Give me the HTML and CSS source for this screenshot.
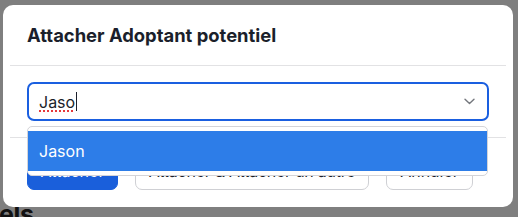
FILE: index.html
```html
<!DOCTYPE html>
<html lang="fr">
<head>
<meta charset="utf-8">
<title>Attacher Adoptant potentiel</title>
<link rel="stylesheet" href="styles.css">
</head>
<body>
<div class="page">
  <h2 class="page-title">els</h2>
</div>
<div class="overlay">
  <div class="modal">
    <div class="modal-header">
      <h1 class="modal-title">Attacher Adoptant potentiel</h1>
    </div>
    <div class="modal-body">
      <div class="select">
        <div class="select-input">
          <span class="typed">Jaso</span><span class="caret"></span>
          <svg class="chevron" width="11" height="7" viewBox="0 0 11 7"><path d="M1 1.2 L5.5 5.6 L10 1.2" fill="none" stroke="#74777d" stroke-width="1.4" stroke-linecap="round" stroke-linejoin="round"/></svg>
        </div>
        <ul class="select-menu">
          <li class="option active">Jason</li>
        </ul>
      </div>
    </div>
    <div class="modal-footer">
      <button class="btn btn-primary btn-attach">Attacher</button>
      <button class="btn btn-outline btn-attach-more">Attacher &amp; Attacher un autre</button>
      <button class="btn btn-outline btn-cancel">Annuler</button>
    </div>
  </div>
</div>
</body>
</html>
```
FILE: styles.css
```css
html, body {
  margin: 0;
  padding: 0;
}
body {
  width: 518px;
  height: 217px;
  overflow: hidden;
  position: relative;
  background: #ffffff;
  font-family: Inter, "Noto Sans", "Liberation Sans", sans-serif;
}
.page {
  height: 217px;
  overflow: hidden;
  display: flex;
  flex-direction: column;
  justify-content: flex-end;
}
.page-title {
  margin: 0 0 -12px -1px;
  font-size: 25px;
  font-weight: 700;
  color: #222;
  line-height: 30px;
  letter-spacing: -0.3px;
}
.overlay {
  position: absolute;
  inset: 0;
  background: rgba(0, 0, 0, 0.5);
  padding: 5px 5px 0 3px;
  box-sizing: border-box;
}
.modal {
  width: 510px;
  height: 202px;
  background: #fff;
  border-radius: 10px;
  display: flex;
  flex-direction: column;
}
.modal-header {
  height: 60px;
  display: flex;
  align-items: center;
  border-bottom: 1px solid #e2e2e4;
  margin: 0 7px;
  padding: 0 17px;
}
.modal-title {
  margin: 0;
  font-size: 18.4px;
  font-weight: 700;
  color: #1b1f2b;
  letter-spacing: 0;
}
.modal-body {
  border-bottom: 1px solid #e2e2e4;
  margin: 0 7px;
  padding: 16px 17px;
}
.select {
  position: relative;
}
.select-input {
  height: 39px;
  box-sizing: border-box;
  border: 2px solid #1a5fe0;
  border-radius: 7px;
  display: flex;
  align-items: center;
  padding: 0 12px 0 10px;
  font-size: 16px;
  color: #1b1f2b;
}
.typed {
  text-decoration: underline dotted #e5383b;
  text-decoration-thickness: 2px;
  text-underline-offset: 3px;
}
.caret {
  width: 1px;
  height: 19px;
  background: #1b1f2b;
  margin-left: 1px;
}
.chevron {
  margin-left: auto;
}
.select-menu {
  position: absolute;
  left: 0;
  right: 1px;
  top: 44px;
  margin: 0;
  padding: 4px 0;
  list-style: none;
  background: #fff;
  border: 1px solid #d4d4d8;
  border-radius: 5px;
  z-index: 2;
}
.option {
  height: 40px;
  display: flex;
  align-items: center;
  padding: 0 11px;
  font-size: 16px;
  color: #fff;
}
.option.active {
  background: #2d7de8;
}
.modal-footer {
  display: flex;
  gap: 17px;
  padding: 14px 24px 16px 24px;
}
.btn {
  height: 38px;
  font-family: inherit;
  font-size: 16px;
  border-radius: 7px;
  padding: 0;
  cursor: pointer;
  white-space: nowrap;
}
.btn-attach {
  width: 91px;
}
.btn-attach-more {
  width: 234px;
  letter-spacing: -0.25px;
}
.btn-cancel {
  width: 87px;
}
.btn-primary {
  background: #1a5fdb;
  border: 1px solid #1a5fdb;
  color: #fff;
}
.btn-outline {
  background: #fff;
  border: 1px solid #cfd0d4;
  color: #1b1f2b;
}
```
